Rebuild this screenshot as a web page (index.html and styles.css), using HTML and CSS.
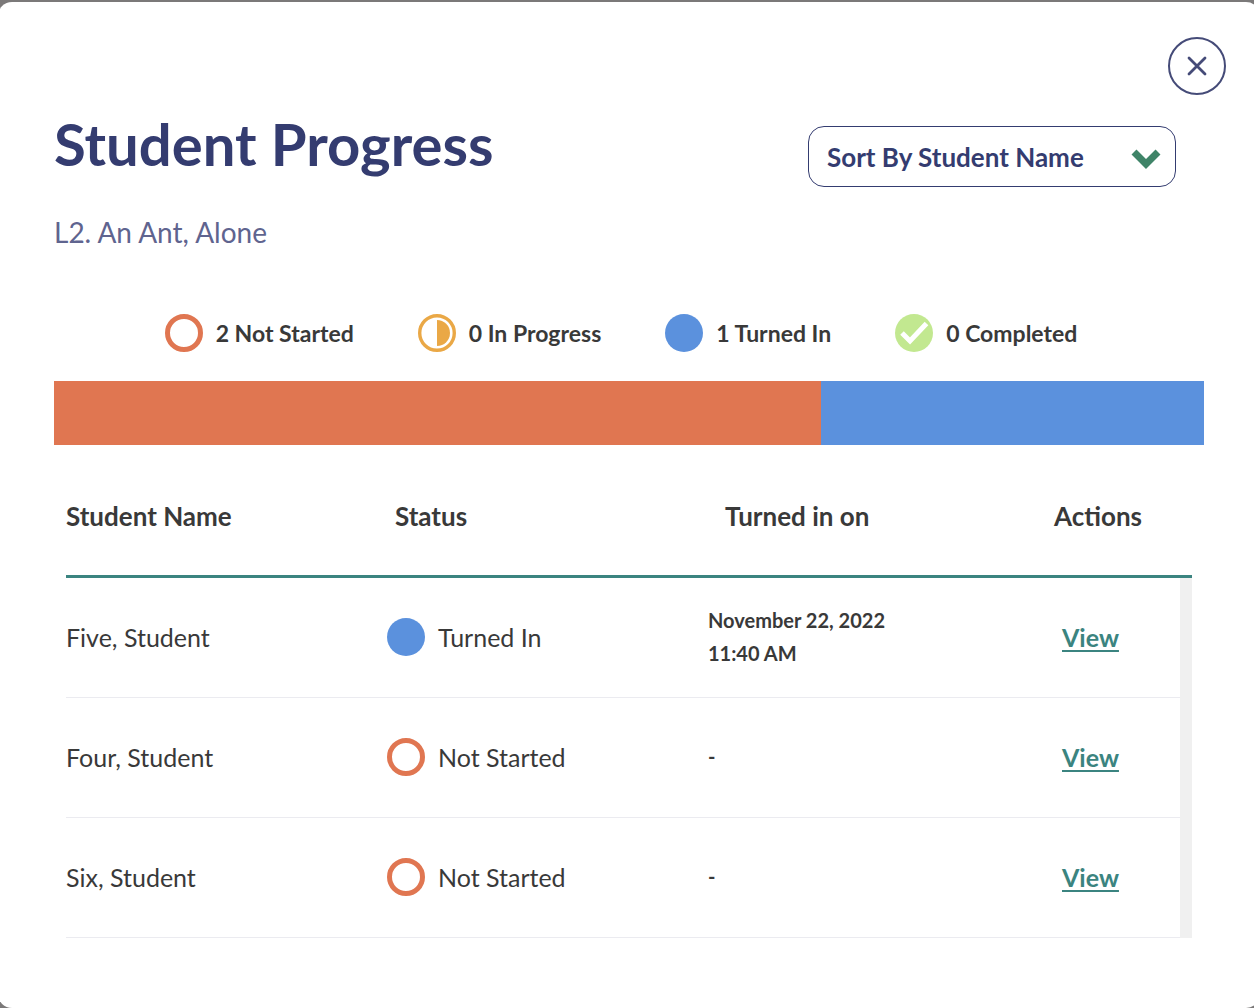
FILE: index.html
```
<!DOCTYPE html>
<html lang="en">
<head>
  <meta charset="UTF-8" />
  <meta name="viewport" content="width=device-width, initial-scale=1.0" />
  <title>Student Progress</title>
  <link rel="stylesheet" href="styles.css">
</head>
<body>
  <!-- shared status icons -->
  <svg class="sprite" aria-hidden="true">
    <symbol id="not-started" viewBox="0 0 38 38">
      <circle cx="19" cy="19" r="16.5" fill="none" stroke="#e07651" stroke-width="5" />
    </symbol>
    <symbol id="in-progress" viewBox="0 0 38 38">
      <circle cx="19" cy="19" r="17.3" fill="none" stroke="#eaa846" stroke-width="3.4" />
      <path d="M19 6a13 13 0 0 1 0 26z" fill="#eaa846" />
    </symbol>
    <symbol id="turned-in" viewBox="0 0 38 38">
      <circle cx="19" cy="19" r="19" fill="#5b91dd" />
    </symbol>
    <symbol id="completed" viewBox="0 0 38 38">
      <circle cx="19" cy="19" r="19" fill="#c2e890" />
      <path d="M7 19l8 8L31.500 9.500" fill="none" stroke="#fff" stroke-width="5" />
    </symbol>
  </svg>

  <main class="modal">
    <div class="close-row">
      <button class="close" aria-label="Close">
        <svg width="20" height="20" viewBox="0 0 20 20">
          <path d="M2 2l16 16M18 2l-16 16" fill="none" stroke="#454b78" stroke-width="2.800" stroke-linecap="round" />
        </svg>
      </button>
    </div>

    <header class="modal-header">
      <div>
        <h1>Student Progress</h1>
        <p class="lesson">L2. An Ant, Alone</p>
      </div>
      <div class="sort">
        <select aria-label="Sort students">
          <option>Sort By Student Name</option>
          <option>Sort By Status</option>
        </select>
        <svg class="chevron" width="30" height="20" viewBox="0 0 30 20">
          <path d="M3 3l12 12L27 3" fill="none" stroke="#3f8468" stroke-width="7" />
        </svg>
      </div>
    </header>

    <ul class="legend">
      <li><svg class="icon"><use href="#not-started" /></svg>2 Not Started</li>
      <li><svg class="icon"><use href="#in-progress" /></svg>0 In Progress</li>
      <li><svg class="icon"><use href="#turned-in" /></svg>1 Turned In</li>
      <li><svg class="icon"><use href="#completed" /></svg>0 Completed</li>
    </ul>

    <div class="progress">
      <div class="progress-not-started" style="flex-grow: 2"></div>
      <div class="progress-turned-in" style="flex-grow: 1"></div>
    </div>

    <table class="students">
      <thead>
        <tr>
          <th>Student Name</th>
          <th>Status</th>
          <th>Turned in on</th>
          <th>Actions</th>
        </tr>
      </thead>
      <tbody>
        <tr>
          <td>Five, Student</td>
          <td class="status"><svg class="icon"><use href="#turned-in" /></svg>Turned In</td>
          <td class="date">November 22, 2022<br>11:40 AM</td>
          <td class="action"><a href="#">View</a></td>
        </tr>
        <tr>
          <td>Four, Student</td>
          <td class="status"><svg class="icon"><use href="#not-started" /></svg>Not Started</td>
          <td class="date">-</td>
          <td class="action"><a href="#">View</a></td>
        </tr>
        <tr>
          <td>Six, Student</td>
          <td class="status"><svg class="icon"><use href="#not-started" /></svg>Not Started</td>
          <td class="date">-</td>
          <td class="action"><a href="#">View</a></td>
        </tr>
      </tbody>
    </table>
  </main>
</body>
</html>
```
FILE: styles.css
```
:root {
  --navy: #343c70;
  --text: #393939;
  --teal: #3b8480;
  --orange: #e07651;
  --blue: #5b91dd;
}

* {
  box-sizing: border-box;
  margin: 0;
  padding: 0;
}

body {
  background: #7b7979;
  color: var(--text);
  font-family: Lato, sans-serif;
  padding-top: 2px;
  overflow-x: hidden;
}

.sprite {
  position: absolute;
  width: 0;
  height: 0;
}

.modal {
  margin: 0 -6px 0 -2px;
  padding: 35px 56px 70px;
  background: #fff;
  border-radius: 14px;
}

.close-row {
  display: flex;
  justify-content: flex-end;
  margin-right: -22px;
}

.close {
  display: flex;
  align-items: center;
  justify-content: center;
  width: 58px;
  height: 58px;
  background: none;
  border: 2px solid #454b78;
  border-radius: 50%;
  cursor: pointer;
}

.modal-header {
  display: flex;
  justify-content: space-between;
  align-items: flex-start;
  padding: 13px 28px 0 0;
}

h1 {
  color: var(--navy);
  font-size: 58px;
  font-weight: 700;
  line-height: 72px;
}

.lesson {
  margin-top: 34px;
  color: #5f648f;
  font-size: 28px;
  font-weight: 400;
  line-height: 36px;
}

.sort {
  position: relative;
  width: 368px;
  margin-top: 18px;
}

.sort select {
  display: block;
  width: 100%;
  height: 61px;
  padding: 0 60px 0 18px;
  appearance: none;
  background: #fff;
  border: 1px solid var(--navy);
  border-radius: 16px;
  color: var(--navy);
  font-family: inherit;
  font-size: 26px;
  font-weight: 700;
}

.chevron {
  position: absolute;
  top: 23px;
  right: 15px;
  pointer-events: none;
}

.legend {
  display: flex;
  justify-content: center;
  gap: 64px;
  margin-top: 64px;
  padding-right: 16px;
  list-style: none;
  font-size: 23px;
  font-weight: 700;
}

.legend li {
  display: flex;
  align-items: center;
  gap: 13px;
}

.icon {
  flex: none;
  width: 38px;
  height: 38px;
}

.progress {
  display: flex;
  height: 64px;
  margin-top: 29px;
}

.progress-not-started {
  background: var(--orange);
}

.progress-turned-in {
  background: var(--blue);
}

.students {
  display: block;
  margin: 13px 12px 0;
}

.students thead,
.students tbody {
  display: block;
}

.students tr {
  display: grid;
  align-items: center;
  padding-bottom: 2px;
}

.students thead {
  border-bottom: 3px solid var(--teal);
}

.students thead tr {
  grid-template-columns: 329fr 330fr 329fr 138fr;
  height: 117px;
}

.students th {
  text-align: left;
  font-size: 26px;
  font-weight: 700;
}

/* scroll track */
.students tbody {
  border-right: 12px solid #f0f0f0;
}

.students tbody tr {
  grid-template-columns: 321fr 321fr 354fr 118fr;
  height: 120px;
  border-bottom: 1px solid #ebebf0;
}

.students td {
  font-size: 25px;
  font-weight: 400;
}

.students .status {
  display: flex;
  align-items: center;
  gap: 13px;
}

.students .date {
  font-size: 20px;
  font-weight: 700;
  line-height: 33px;
}

.students a {
  color: var(--teal);
  font-weight: 700;
  text-underline-offset: 3px;
  text-decoration-thickness: 2px;
}
```
